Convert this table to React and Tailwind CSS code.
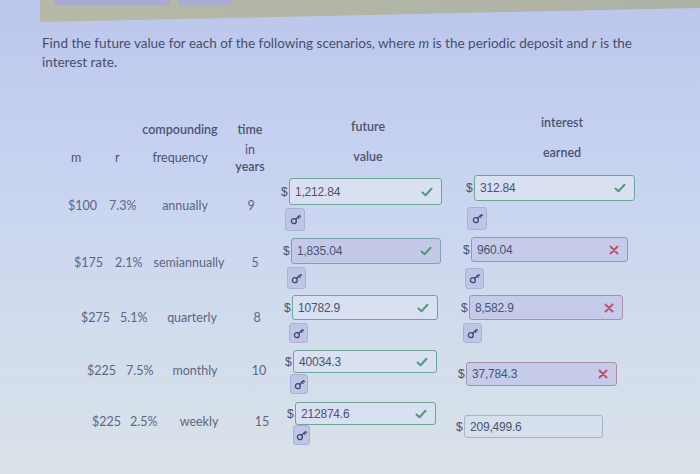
import React from "react";

const rows = [
  { m: "$100", r: "7.3%", f: "annually", t: "9", mc: "ml-[68px] w-[41px]", rc: "w-[31px]", tc: "ml-[6px]", top: "mt-[16px]" },
  { m: "$175", r: "2.1%", f: "semiannually", t: "5", mc: "ml-[74px] w-[41px]", rc: "w-[29px]", tc: "ml-[6px]", top: "mt-[33px]" },
  { m: "$275", r: "5.1%", f: "quarterly", t: "8", mc: "ml-[81px] w-[39px]", rc: "w-[27px]", tc: "ml-[5px]", top: "mt-[31px]" },
  { m: "$225", r: "7.5%", f: "monthly", t: "10", mc: "ml-[87px] w-[39px]", rc: "w-[24px]", tc: "ml-[4px]", top: "mt-[29px]" },
  { m: "$225", r: "2.5%", f: "weekly", t: "15", mc: "ml-[92px] w-[38px]", rc: "w-[24px]", tc: "ml-[3px]", top: "mt-[27px]" },
];

function KeyIcon() {
  return (
    <svg width="11" height="11" viewBox="0 0 12 12" fill="none" stroke="#3d4770" strokeWidth="1.4" strokeLinecap="round">
      <circle cx="4.2" cy="7.8" r="2.7" />
      <path d="M6.2 5.8 L10.4 1.8" />
      <path d="M8.6 3.5 L9.8 4.6" />
      <path d="M10.4 1.8 L11.3 2.8" />
    </svg>
  );
}

function Check() {
  return (
    <svg width="12" height="10" viewBox="0 0 12 10" fill="none" stroke="#4f9a7b" strokeWidth="2" strokeLinecap="round" strokeLinejoin="round">
      <path d="M1.5 5.5 L4.5 8.2 L10.5 1.8" />
    </svg>
  );
}

function Cross() {
  return (
    <svg width="10" height="10" viewBox="0 0 10 10" fill="none" stroke="#c4506c" strokeWidth="2" strokeLinecap="round">
      <path d="M1.5 1.5 L8.5 8.5 M8.5 1.5 L1.5 8.5" />
    </svg>
  );
}

function Answer({ value, box, status, wrap }) {
  return (
    <div className={"flex items-center " + wrap}>
      <span className="w-[8px] text-[12px] text-[#4a5270] font-['Liberation_Sans',sans-serif]">$</span>
      <div className={"flex items-center justify-between rounded-[3px] border pl-[5px] pr-[8px] " + box}>
        <span className="text-[12px] text-[#4b5272] font-['Liberation_Sans',sans-serif] tracking-[-0.2px]">{value}</span>
        {status === "ok" && <Check />}
        {status === "bad" && <Cross />}
      </div>
    </div>
  );
}

function KeyBtn({ cls }) {
  return (
    <div className={"flex items-center justify-center rounded-[3px] border border-[#aab1d4] bg-[#bfc5e6] " + cls}>
      <KeyIcon />
    </div>
  );
}

const okBox = "border-[#6fa597] bg-[#d8e0f2]";
const badBox = "border-[#ad8ea4] bg-[#c6cbea]";

export default function App() {
  return (
    <div className="w-[700px] h-[474px] overflow-hidden bg-[linear-gradient(180deg,#bcc6ec_0%,#c6d1f1_30%,#d0dbee_65%,#d9e2e8_100%)] font-['Lato',sans-serif]">
      <div className="flex h-[22px]">
        <div className="w-[40px] shrink-0" />
        <div className="relative flex-1 bg-[linear-gradient(90deg,#b7b9a6,#adb2a6)] [clip-path:polygon(0_0,100%_0,100%_36%,0_100%)]">
          <div className="flex">
            <div className="ml-[14px] w-[116px] h-[5px] rounded-b-[3px] bg-[#a9acce]" />
            <div className="ml-[8px] w-[54px] h-[5px] rounded-b-[3px] bg-[#a9acce]" />
          </div>
        </div>
      </div>

      <p className="mt-[12px] ml-[42px] w-[640px] text-[13.5px] leading-[19px] text-[#474e6c]">
        Find the future value for each of the following scenarios, where <i>m</i> is the periodic deposit and <i>r</i> is the
        <br />
        interest rate.
      </p>

      <div className="mt-[43px] flex">
        <div className="w-[278px] shrink-0">
          <div className="flex h-[63px] text-[12.5px] font-semibold text-[#4c5372] leading-[16px]">
            <span className="ml-[71px] w-[44px] mt-[35px] font-normal">m</span>
            <span className="w-[20px] mt-[35px] font-normal">r</span>
            <div className="flex w-[90px] flex-col items-center">
              <span className="mt-[7px]">compounding</span>
              <span className="mt-[12px] font-normal">frequency</span>
            </div>
            <div className="ml-[7px] flex w-[36px] flex-col items-center">
              <span className="mt-[7px]">time</span>
              <span className="mt-[4px] font-normal">in</span>
              <span className="mt-[1px]">years</span>
            </div>
          </div>
          {rows.map((row, i) => (
            <div key={i} className={"flex h-[24px] items-center text-[12.5px] text-[#5d6683] " + row.top}>
              <span className={row.mc}>{row.m}</span>
              <span className={row.rc}>{row.r}</span>
              <span className="w-[90px] text-center">{row.f}</span>
              <span className={"w-[30px] text-center " + row.tc}>{row.t}</span>
            </div>
          ))}
        </div>

        <div className="w-[177px] shrink-0 flex flex-col">
          <div className="w-[180px] text-center text-[12.5px] font-semibold leading-[16px] text-[#4c5372]">
            <div className="mt-[4px]">future</div>
            <div className="mt-[14px]">value</div>
          </div>
          <Answer value="1,212.84" status="ok" wrap="mt-[13px] ml-[3px]" box={"w-[153px] h-[27px] " + okBox} />
          <KeyBtn cls="mt-[3px] ml-[7px] w-[20px] h-[23px]" />
          <Answer value="1,835.04" status="ok" wrap="mt-[7px] ml-[5px]" box="w-[150px] h-[26px] border-[#7da3ad] bg-[#c4c9e8]" />
          <KeyBtn cls="mt-[3px] ml-[9px] w-[19px] h-[22px]" />
          <Answer value="10782.9" status="ok" wrap="mt-[6px] ml-[6px]" box={"w-[146px] h-[25px] " + okBox} />
          <KeyBtn cls="mt-[3px] ml-[11px] w-[19px] h-[20px]" />
          <Answer value="40034.3" status="ok" wrap="mt-[7px] ml-[7px]" box={"w-[144px] h-[23px] " + okBox} />
          <KeyBtn cls="mt-[1px] ml-[12px] w-[18px] h-[20px]" />
          <Answer value="212874.6" status="ok" wrap="mt-[8px] ml-[9px]" box={"w-[141px] h-[23px] " + okBox} />
          <KeyBtn cls="mt-[0px] ml-[15px] w-[17px] h-[20px]" />
        </div>

        <div className="flex flex-1 flex-col">
          <div className="w-[214px] text-center text-[12.5px] font-semibold leading-[16px] text-[#4c5372]">
            <div className="mt-[0px]">interest</div>
            <div className="mt-[14px]">earned</div>
          </div>
          <Answer value="312.84" status="ok" wrap="mt-[14px] ml-[11px]" box={"w-[161px] h-[26px] " + okBox} />
          <KeyBtn cls="mt-[6px] ml-[12px] w-[20px] h-[23px]" />
          <Answer value="960.04" status="bad" wrap="mt-[7px] ml-[8px]" box={"w-[157px] h-[25px] " + badBox} />
          <KeyBtn cls="mt-[6px] ml-[10px] w-[19px] h-[21px]" />
          <Answer value="8,582.9" status="bad" wrap="mt-[6px] ml-[6px]" box={"w-[154px] h-[25px] " + badBox} />
          <KeyBtn cls="mt-[3px] ml-[8px] w-[19px] h-[20px]" />
          <Answer value="37,784.3" status="bad" wrap="mt-[19px] ml-[3px]" box={"w-[151px] h-[24px] " + badBox} />
          <Answer value="209,499.6" wrap="mt-[29px] ml-[1px]" box="w-[139px] h-[23px] border-[#a9b2c6] bg-[#d6dfec]" />
        </div>
      </div>
    </div>
  );
}
